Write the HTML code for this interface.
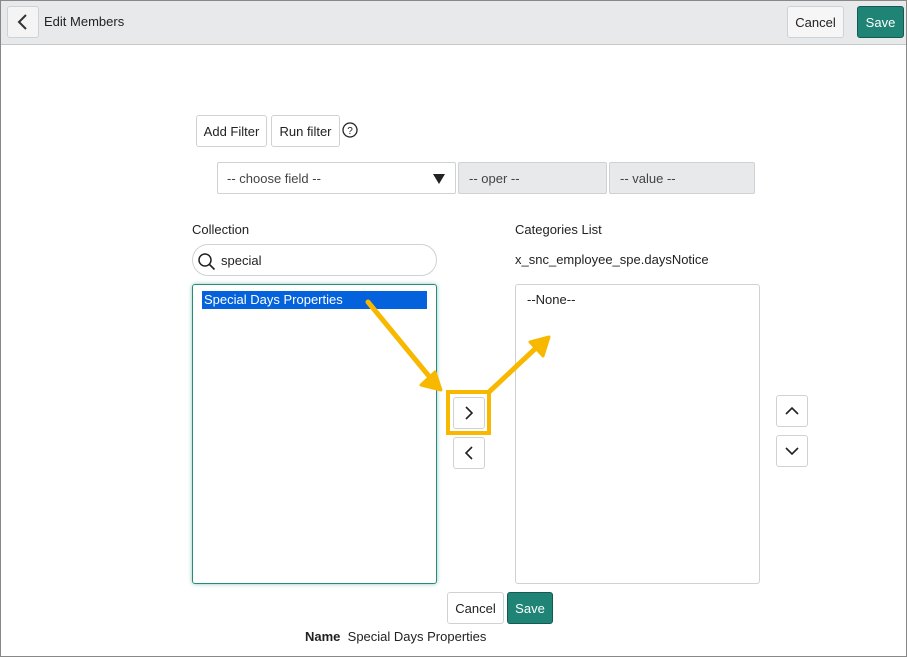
<!DOCTYPE html>
<html><head><meta charset="utf-8"><style>
*{box-sizing:border-box;margin:0;padding:0}
body{width:907px;height:657px;position:relative;background:#fff;font-family:"Liberation Sans",sans-serif;font-size:13px;color:#222;overflow:hidden}
.a{position:absolute}
.frame{left:0;top:0;width:907px;height:657px;border:1px solid #888}
.hdr{left:1px;top:1px;width:905px;height:44px;background:#e8e9ea;border-bottom:1px solid #c8c8c8}
.btn{position:absolute;background:#fff;border:1px solid #cfd2d4;border-radius:3px;display:flex;align-items:center;justify-content:center;font-size:13px;color:#222}
.save{background:#1f8476;border-color:#145a50;color:#fff}
.gray{background:#e8e9ea;border:1px solid #cfd2d4;border-radius:2px;color:#444;padding-left:10px;display:flex;align-items:center}
</style></head><body>
<div class="a frame"></div>
<div class="a hdr"></div>
<div class="btn" style="left:7px;top:6px;width:32px;height:32px;background:#f4f4f4"><svg width="14" height="16" viewBox="0 0 14 16"><path d="M10 1L3 8l7 7" fill="none" stroke="#333" stroke-width="2"/></svg></div>
<div class="a" style="left:44px;top:14px;font-size:13px;color:#222">Edit Members</div>
<div class="btn" style="left:787px;top:6px;width:57px;height:32px;background:#f6f6f6">Cancel</div>
<div class="btn save" style="left:857px;top:6px;width:47px;height:32px">Save</div>

<div class="btn" style="left:196px;top:115px;width:71px;height:32px">Add Filter</div>
<div class="btn" style="left:271px;top:115px;width:69px;height:32px">Run filter</div>
<svg class="a" style="left:342px;top:122px" width="16" height="16" viewBox="0 0 16 16"><circle cx="8" cy="8" r="7" fill="none" stroke="#222" stroke-width="1.3"/><text x="8" y="12" font-size="10" text-anchor="middle" font-family="Liberation Sans" fill="#222">?</text></svg>

<div class="a" style="left:217px;top:162px;width:239px;height:32px;border:1px solid #cfd2d4;border-radius:2px;padding-left:9px;display:flex;align-items:center;color:#444">-- choose field --</div>
<svg class="a" style="left:433px;top:174px" width="12" height="10"><path d="M0 0h12L6 10z" fill="#222"/></svg>
<div class="a gray" style="left:458px;top:162px;width:149px;height:32px">-- oper --</div>
<div class="a gray" style="left:609px;top:162px;width:146px;height:32px">-- value --</div>

<div class="a" style="left:192px;top:222px">Collection</div>
<div class="a" style="left:192px;top:244px;width:245px;height:32px;border:1px solid #cfd2d4;border-radius:16px;display:flex;align-items:center;padding-left:28px">special</div>
<svg class="a" style="left:197px;top:252px" width="20" height="20" viewBox="0 0 20 20"><circle cx="8" cy="8" r="6" fill="none" stroke="#222" stroke-width="1.5"/><path d="M12.5 12.5l5 5" stroke="#222" stroke-width="1.6"/></svg>
<div class="a" style="left:192px;top:284px;width:245px;height:300px;border:1px solid #2a8a7a;border-radius:3px;box-shadow:0 0 4px #8cc8be"></div>
<div class="a" style="left:202px;top:291px;width:225px;height:18px;background:#0463dc;color:#fff;padding-left:2px;line-height:18px">Special Days Properties</div>

<div class="a" style="left:515px;top:222px">Categories List</div>
<div class="a" style="left:515px;top:252px">x_snc_employee_spe.daysNotice</div>
<div class="a" style="left:515px;top:284px;width:245px;height:300px;border:1px solid #cfd2d4;border-radius:3px"></div>
<div class="a" style="left:527px;top:292px">--None--</div>

<div class="btn" style="left:453px;top:397px;width:32px;height:32px"><svg width="10" height="14"><path d="M2 1l6 6-6 6" fill="none" stroke="#222" stroke-width="1.6"/></svg></div>
<div class="a" style="left:446px;top:390px;width:45px;height:45px;border:4px solid #f8b800"></div>
<div class="btn" style="left:453px;top:437px;width:32px;height:32px"><svg width="10" height="14"><path d="M8 1L2 7l6 6" fill="none" stroke="#222" stroke-width="1.6"/></svg></div>
<div class="btn" style="left:776px;top:395px;width:32px;height:32px"><svg width="14" height="10"><path d="M1 8l6-6 6 6" fill="none" stroke="#222" stroke-width="1.6"/></svg></div>
<div class="btn" style="left:776px;top:435px;width:32px;height:32px"><svg width="14" height="10"><path d="M1 2l6 6 6-6" fill="none" stroke="#222" stroke-width="1.6"/></svg></div>

<svg class="a" style="left:0;top:0" width="907" height="657">
<path d="M368 302L428 375" stroke="#f8b800" stroke-width="5" stroke-linecap="round"/>
<path d="M441 390L421 385L435 372z" fill="#f8b800" stroke="#f8b800" stroke-width="3" stroke-linejoin="round"/>
<path d="M489 392L537 347" stroke="#f8b800" stroke-width="5"/>
<path d="M549 337L543 356L530 342z" fill="#f8b800" stroke="#f8b800" stroke-width="3" stroke-linejoin="round"/>
</svg>

<div class="btn" style="left:447px;top:592px;width:57px;height:32px">Cancel</div>
<div class="btn save" style="left:507px;top:592px;width:46px;height:32px">Save</div>
<div class="a" style="left:305px;top:629px"><b style="font-weight:600">Name</b>&nbsp; Special Days Properties</div>
</body></html>
